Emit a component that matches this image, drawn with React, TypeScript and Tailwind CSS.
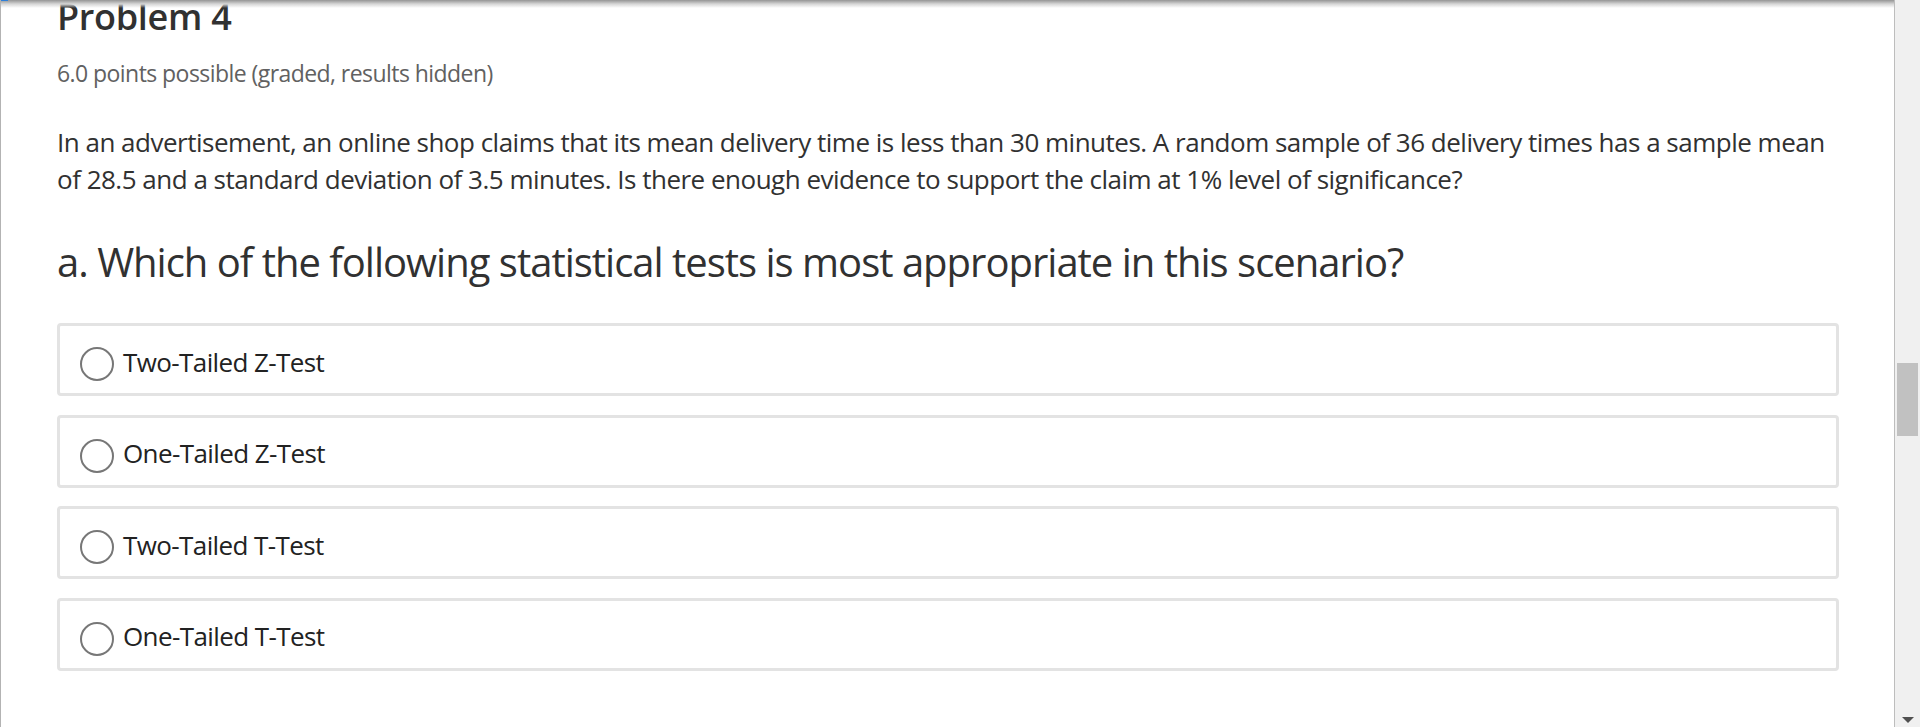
import React from "react";

const options = [
  "Two-Tailed Z-Test",
  "One-Tailed Z-Test",
  "Two-Tailed T-Test",
  "One-Tailed T-Test",
];

export default function App() {
  return (
    <div
      className="flex h-[727px] w-[1920px] overflow-hidden bg-white"
      style={{ fontFamily: '"Open Sans", "Noto Sans", sans-serif' }}
    >
      <main className="relative w-[1894px] shrink-0 border-l border-[#b3b3b3] bg-white pl-[56px]">
        <div className="pointer-events-none absolute left-0 right-0 top-0 h-[8px] bg-gradient-to-b from-[#959595] via-[#d6d6d6] to-transparent" />
        <div className="absolute left-0 top-0 h-[1px] w-[7px] bg-[#2f7fd8]" />
        <div className="w-[1782px]">
          <h2 className="text-[36px] font-semibold leading-[34px] tracking-[-0.3px] text-[#313131]">
            Problem 4
          </h2>
          <p className="mt-[24px] text-[23px] leading-[30px] tracking-[-0.56px] text-[#616161]">
            6.0 points possible (graded, results hidden)
          </p>
          <p className="mt-[36px] text-[26px] leading-[36.7px] tracking-[-0.5px] text-[#313131]">
            In an advertisement, an online shop claims that its mean delivery time is less than 30
            minutes. A random sample of 36 delivery times has a sample mean of 28.5 and a standard
            deviation of 3.5 minutes. Is there enough evidence to support the claim at 1% level of
            significance?
          </p>
          <h3 className="mt-[41px] text-[40px] leading-[48px] tracking-[-1px] text-[#313131]">
            a. Which of the following statistical tests is most appropriate in this scenario?
          </h3>
          <div className="mt-[37px] flex flex-col gap-[18.5px]">
            {options.map((o) => (
              <label
                key={o}
                className="flex h-[73px] items-center rounded-[4px] border-[3px] border-[#e3e3e3] pl-[20px] pt-[4px]"
              >
                <span className="mt-[5px] h-[34px] w-[34px] shrink-0 rounded-full border-2 border-[#777777] bg-white" />
                <span className="ml-[9px] text-[26px] leading-[36px] tracking-[-0.6px] text-[#222222]">
                  {o}
                </span>
              </label>
            ))}
          </div>
        </div>
      </main>
      <aside className="flex w-[26px] shrink-0 flex-col items-center border-l border-[#bdbdbd] bg-[#f0f0f0]">
        <div className="mt-[363px] h-[73px] w-[21px] bg-[#c1c1c1]" />
        <div className="flex-1" />
        <svg width="12" height="7" viewBox="0 0 12 7" className="mb-[3px]">
          <path d="M0 0 L12 0 L6 6 Z" fill="#505050" />
        </svg>
      </aside>
    </div>
  );
}
